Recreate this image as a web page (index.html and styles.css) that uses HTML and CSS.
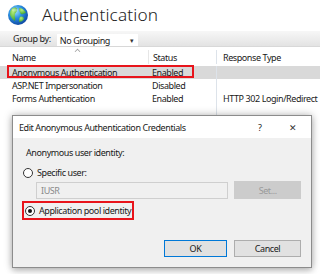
FILE: index.html
```html
<!DOCTYPE html>
<html>
<head>
<meta charset="utf-8">
<link rel="stylesheet" href="styles.css">
</head>
<body>
<div class="page">
  <div class="pagehead">
    <svg class="globe" width="22" height="22" viewBox="0 0 22 22">
      <defs>
        <radialGradient id="sea" cx="0.38" cy="0.32" r="0.75">
          <stop offset="0" stop-color="#9fe0ff"/>
          <stop offset="0.45" stop-color="#2a8fe0"/>
          <stop offset="1" stop-color="#0b3f9a"/>
        </radialGradient>
        <radialGradient id="land" cx="0.4" cy="0.3" r="0.8">
          <stop offset="0" stop-color="#b8f07a"/>
          <stop offset="1" stop-color="#2f9a2a"/>
        </radialGradient>
      </defs>
      <circle cx="11" cy="11" r="10" fill="url(#sea)"/>
      <path d="M4 6 C6 3 9 3 10 5 C11 7 9 8 8 10 C7 12 9 14 8 17 C6 16 4 13 3 11 C3 9 3 7 4 6 Z" fill="url(#land)"/>
      <path d="M12 4 C15 4 18 6 19 9 C17 9 16 11 14 10 C13 9 12 7 12 4 Z" fill="url(#land)"/>
      <path d="M13 13 C15 12 17 13 17 15 C16 17 14 18 12 18 C12 16 12 14 13 13 Z" fill="url(#land)"/>
      <ellipse cx="8" cy="6" rx="3" ry="1.6" fill="#ffffff" opacity="0.35"/>
    </svg>
    <h1 class="title">Authentication</h1>
  </div>
  <div class="toolbar">
    <span class="groupby">Group by:</span>
    <div class="combo"><span>No Grouping</span><span class="caret">▾</span></div>
  </div>
  <div class="grid">
    <div class="row headrow">
      <div class="c1">Name<span class="sort"></span></div>
      <div class="c2">Status</div>
      <div class="c3">Response Type</div>
    </div>
    <div class="row selected">
      <div class="c1">Anonymous Authentication</div>
      <div class="c2">Enabled</div>
      <div class="c3"></div>
      <div class="redbox listbox"></div>
    </div>
    <div class="row">
      <div class="c1">ASP.NET Impersonation</div>
      <div class="c2">Disabled</div>
      <div class="c3"></div>
    </div>
    <div class="row">
      <div class="c1">Forms Authentication</div>
      <div class="c2">Enabled</div>
      <div class="c3">HTTP 302 Login/Redirect</div>
    </div>
    <div class="row filler">
      <div class="c1"></div><div class="c2"></div><div class="c3"></div>
    </div>
  </div>

  <div class="dialog">
    <div class="titlebar">
      <span class="dtitle">Edit Anonymous Authentication Credentials</span>
      <span class="help">?</span>
      <span class="close">✕</span>
    </div>
    <div class="dbody">
      <div class="label">Anonymous user identity:</div>
      <div class="radio-row">
        <span class="radio"></span><span>Specific user:</span>
      </div>
      <div class="user-row">
        <div class="textbox">IUSR</div>
        <div class="btn disabled">Set...</div>
      </div>
      <div class="radio-row pool">
        <span class="radio checked"></span><span>Application pool identity</span>
        <div class="redbox poolbox"></div>
      </div>
      <div class="buttons">
        <div class="btn default">OK</div>
        <div class="btn">Cancel</div>
      </div>
    </div>
  </div>
</div>
</body>
</html>
```
FILE: styles.css
```css
* { box-sizing: border-box; }
html, body { margin: 0; padding: 0; }
body {
  width: 320px;
  height: 274px;
  overflow: hidden;
  background: #ffffff;
  font-family: "Noto Sans", "Open Sans", sans-serif;
  font-size: 9px;
  color: #1a1a1a;
  white-space: nowrap;
}
.page {
  position: relative;
  width: 320px;
  height: 274px;
}
.pagehead {
  display: flex;
  align-items: center;
  height: 28px;
  padding-left: 7px;
  padding-top: 1px;
}
.globe { flex: none; }
.title {
  margin: 0 0 0 13px;
  font-weight: 300;
  font-size: 17.2px;
  color: #222;
  letter-spacing: 0.15px;
}
.toolbar {
  margin-top: 3px;
  height: 16px;
  display: flex;
  align-items: center;
  padding-left: 13px;
  background: linear-gradient(#f7f7f7, #e3e3e3);
  border-bottom: 1px solid #d8d8d8;
  letter-spacing: -0.4px;
}
.combo {
  margin-left: 6px;
  width: 81px;
  height: 12px;
  margin-top: 3px;
  align-self: flex-start;
  background: #fff;
  display: flex;
  align-items: center;
  justify-content: space-between;
  padding: 0 4px 0 3px;
}
.caret { font-size: 7px; color: #333; }
.grid { display: flex; flex-direction: column; }
.row {
  position: relative;
  display: flex;
  height: 13px;
  align-items: center;
  letter-spacing: -0.42px;
}
.row > div { height: 100%; display: flex; align-items: center; }
.c1 { width: 148px; padding-left: 12px; position: relative; }
.c2 { width: 68px; padding-left: 4px; }
.c3 { flex: 1; padding-left: 6px; border-left: 1px solid #dde3ea; }
.headrow { height: 17px; padding-top: 3px; }
.headrow .c2 { border-left: 1px solid #e6e6e6; }
.sort {
  position: absolute;
  left: 75px;
  top: -1px;
  width: 5px;
  height: 5px;
  border-left: 1px solid #9a9a9a;
  border-top: 1px solid #9a9a9a;
  transform: rotate(45deg) scale(0.8);
}
.selected { background: #d9d9d9; margin-top: 2px; height: 13px; }
.filler { height: 20px; }
.redbox {
  position: absolute;
  border: 2px solid #e8141b;
  pointer-events: none;
}
.listbox { left: 7px; top: -1px; width: 187px; height: 15px; }

.dialog {
  position: absolute;
  left: 12px;
  top: 115px;
  width: 300px;
  height: 153px;
  border: 1px solid #8c8c8c;
  background: #f0f0f0;
  box-shadow: 0 0 8px rgba(0,0,0,0.28), 0 3px 6px rgba(0,0,0,0.15);
  display: flex;
  flex-direction: column;
  letter-spacing: -0.42px;
}
.titlebar {
  height: 22px;
  background: #fff;
  display: flex;
  align-items: center;
  padding-left: 6px;
}
.dtitle { flex: 1; }
.help { width: 12px; margin-right: 19px; font-size: 9px; }
.close { width: 12px; margin-right: 10px; font-size: 9px; color: #333; }
.dbody {
  flex: 1;
  display: flex;
  flex-direction: column;
  padding: 8px 10px 0 10px;
}
.label { padding-left: 3px; height: 13px; line-height: 13px; }
.radio-row {
  position: relative;
  margin-top: 7px;
  display: flex;
  align-items: center;
  height: 13px;
}
.radio {
  width: 10px;
  height: 10px;
  border: 1px solid #333;
  border-radius: 50%;
  background: #fff;
  margin-right: 4px;
  position: relative;
  flex: none;
}
.radio.checked::after {
  content: "";
  position: absolute;
  left: 2px;
  top: 2px;
  width: 4px;
  height: 4px;
  border-radius: 50%;
  background: #111;
}
.user-row {
  display: flex;
  align-items: center;
  margin-top: 2px;
  padding-left: 13px;
}
.textbox {
  width: 193px;
  height: 17px;
  border: 1px solid #cfcfcf;
  background: #f0f0f0;
  color: #8a8a8a;
  padding-left: 4px;
  display: flex;
  align-items: center;
}
.btn {
  width: 67px;
  height: 17px;
  border: 1px solid #adadad;
  background: #e1e1e1;
  display: flex;
  align-items: center;
  justify-content: center;
}
.user-row .btn { margin-left: 6px; height: 18px; }
.btn.disabled { background: #cccccc; border-color: #cccccc; color: #9a9a9a; }
.pool { margin-top: 5px; padding-left: 2px; }
.poolbox { left: -1px; top: -3px; width: 112px; height: 19px; }
.buttons {
  display: flex;
  justify-content: flex-end;
  gap: 7px;
  margin-top: auto;
  margin-bottom: 10px;
}
.btn.default { width: 63px; border-color: #0078d7; }
```
